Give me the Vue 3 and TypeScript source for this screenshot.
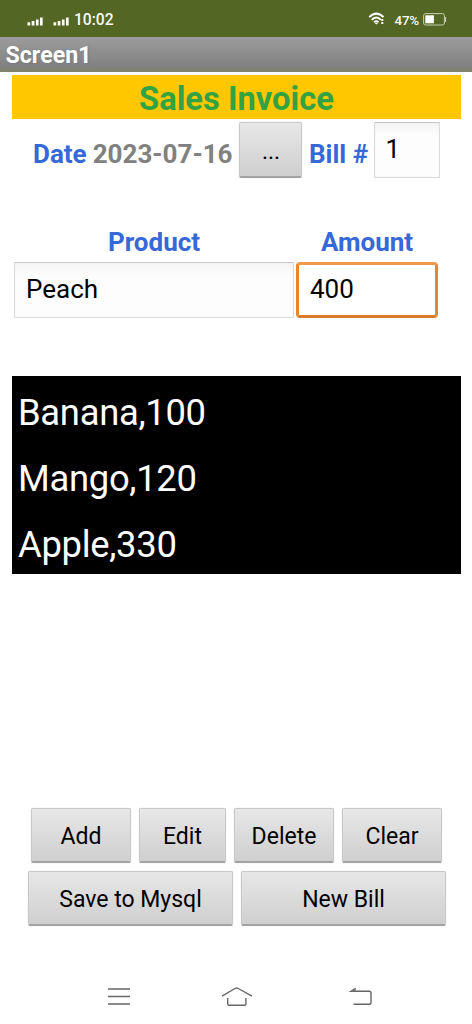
<script setup lang="ts">
import { ref } from 'vue'

const billDate = ref('2023-07-16')
const billNo = ref('1')
const product = ref('Peach')
const amount = ref('400')
const items = ref<string[]>(['Banana,100', 'Mango,120', 'Apple,330'])
const signals = [1, 2]
</script>

<template>
  <div class="phone">
    <header class="status">
      <svg v-for="s in signals" :key="s" class="signal" width="16" height="9" viewBox="0 0 16 9">
        <path d="M.5 5.3h2.7v3.2H.5zM4.7 4.1h2.7v4.4H4.7zM8.9 2.5h2.7v6H8.9zM13 .6h2.7v7.9H13z" fill="#fafbf5" />
      </svg>
      <span class="clock">10:02</span>
      <svg class="wifi" width="18" height="14" viewBox="0 0 18 14" fill="none" stroke="#fff" stroke-width="2">
        <path d="M1.2 5.1Q8.2-1.9 15.6 5.1M3.7 7.9Q8.2 3.2 13 7.9M6.1 10.2q2.2-2 4.4 0" />
        <path d="M6.7 11h3.4l-1.7 1.6z" fill="#fff" stroke="none" />
        <path d="M14.3 7v2M14.3 10v2" />
      </svg>
      <span class="percent">47%</span>
      <svg class="battery" width="24" height="13" viewBox="0 0 24 13">
        <rect x=".6" y=".6" width="20.8" height="11.4" rx="2" fill="none" stroke="#c4cfb1" />
        <rect x="2.3" y="2.3" width="8.6" height="8" fill="#fff" />
        <path d="M22.5 4v5" stroke="#c4cfb1" stroke-width="1.2" />
      </svg>
    </header>
    <div class="appbar">Screen1</div>

    <main>
      <h1>Sales Invoice</h1>
      <div class="bill">
        <span class="label">Date</span>
        <span class="label date">{{ billDate }}</span>
        <button class="pick">...</button>
        <span class="label number">Bill #</span>
        <div class="field bill-field"><span>{{ billNo }}</span></div>
      </div>

      <div class="headings">
        <span class="label">Product</span>
        <span class="label">Amount</span>
      </div>
      <div class="entry">
        <div class="field"><span>{{ product }}</span></div>
        <div class="field focused"><span>{{ amount }}</span></div>
      </div>

      <ul class="list">
        <li v-for="item in items" :key="item">{{ item }}</li>
      </ul>
    </main>

    <div class="actions">
      <div class="row primary">
        <button>Add</button>
        <button>Edit</button>
        <button>Delete</button>
        <button>Clear</button>
      </div>
      <div class="row secondary">
        <button>Save to Mysql</button>
        <button>New Bill</button>
      </div>
    </div>

    <nav>
      <svg width="24" height="20" viewBox="0 0 24 20" fill="none" stroke="#666" stroke-width="1.4">
        <path d="M1 2h22M1 9.5h22M1 17h22" />
      </svg>
      <svg class="home" width="32" height="20" viewBox="0 0 32 20" fill="none" stroke="#666" stroke-width="1.4">
        <path d="M1 9.2 14 1.5q1.6-.9 3.2 0L31 9.2M6.7 11v6q0 1.3 1.3 1.3h15.6q1.3 0 1.3-1.3v-6" />
      </svg>
      <svg width="24" height="20" viewBox="0 0 24 20" fill="none" stroke="#666" stroke-width="1.4">
        <path d="M6.7 1.4 2 4.3h18.2q1.8 0 1.8 1.8v9.4q0 1.8-1.8 1.8H4.5" />
        <path d="M2 4.3 6.7 1.4v2.9z" fill="#777" stroke="none" />
      </svg>
    </nav>
  </div>
</template>

<style>
body {
  margin: 0;
  background: #fff;
}
</style>

<style scoped>
.phone {
  width: 472px;
  height: 1024px;
  display: flex;
  flex-direction: column;
  box-sizing: border-box;
  overflow: hidden;
  background: #fff;
  color: #000;
  font-family: Roboto, "Liberation Sans", sans-serif;
  white-space: nowrap;
}
svg {
  flex: none;
  display: block;
}
.status {
  flex: none;
  height: 37px;
  display: flex;
  align-items: center;
  padding: 1px 25px 0 27px;
  box-sizing: border-box;
  background: #536623;
  color: #fafbf5;
  font-weight: 500;
}
.signal {
  margin: 4px 10px 0 0;
}
.signal + .signal {
  margin-right: 5px;
}
.clock {
  margin-top: 1px;
  font-size: 15.6px;
}
.wifi {
  margin-left: auto;
}
.percent {
  margin: 2px 4px 0 9px;
  font-size: 13.4px;
  letter-spacing: -0.2px;
}
.appbar {
  flex: none;
  height: 35px;
  box-sizing: border-box;
  padding-left: 5.5px;
  background: linear-gradient(#9c9c9c, #808080 88%, #7f846f 91%, #7f846f);
  color: #fff;
  font-size: 23.2px;
  font-weight: 700;
  line-height: 36px;
  text-shadow: 1px 1px 2px #777;
}
main {
  flex: none;
  padding: 3px 11px 0 12px;
}
h1 {
  margin: 0;
  height: 43.5px;
  background: #ffc700;
  color: #31a343;
  font-size: 32.7px;
  font-weight: 700;
  line-height: 48px;
  text-align: center;
}
.label {
  color: #3668d8;
  font-size: 26px;
  font-weight: 700;
}
.bill {
  display: flex;
  height: 56px;
  margin-top: 3.5px;
  padding-left: 21px;
}
.bill .label {
  line-height: 64px;
}
.bill .date {
  margin-left: 6px;
  color: #808080;
}
button {
  box-sizing: border-box;
  padding: 0;
  border: 1px solid #c9c9c9;
  border-bottom: 2px solid #a2a2a2;
  border-radius: 2px;
  background: linear-gradient(#e7e7e7, #cfcfcf);
  box-shadow: 0 0 1px #bbb;
  color: #000;
  font: 400 23px/54px Roboto, "Liberation Sans", sans-serif;
}
.pick {
  width: 63px;
  height: 56px;
  margin: 0 6.5px 0 7px;
  line-height: 58px;
}
.field {
  flex: none;
  width: 280px;
  height: 56px;
  box-sizing: border-box;
  border: 1px solid #dcdcdc;
  border-top-color: #cbcbcb;
  box-shadow: inset 0 0 1px #d8d8d8;
  background: linear-gradient(#f4f4f4, #fdfdfd 12px);
  padding-left: 11px;
  font-size: 26px;
  line-height: 53px;
}
.bill-field {
  width: 66px;
  margin-left: 5.5px;
}
.headings {
  display: grid;
  grid-template-columns: 284px 142px;
  height: 40px;
  margin-top: 44px;
  line-height: 41px;
  text-align: center;
}
.entry {
  display: flex;
  gap: 2px;
  padding-left: 2px;
}
.field.focused {
  width: 142px;
  border: 3px solid #e9862b;
  border-top-color: #ef9a4b;
  border-bottom-color: #dc7c28;
  border-radius: 4px;
  box-shadow: none;
  background: #fff;
  padding-left: 11px;
  line-height: 49px;
}
.list {
  margin: 58px 0 0;
  padding: 4px 6px 0;
  height: 198px;
  box-sizing: border-box;
  background: #000;
  color: #fff;
  list-style: none;
  font-size: 36.4px;
  letter-spacing: -0.3px;
  line-height: 66px;
}
.actions {
  display: flex;
  flex-direction: column;
  gap: 8px;
  margin-top: 234px;
}
.row {
  display: grid;
  gap: 8px;
}
.row button {
  height: 55px;
  padding-top: 1px;
}
.primary {
  grid-template-columns: 100px 87px 100px 100px;
  padding-left: 31px;
}
.secondary {
  grid-template-columns: 205px 205px;
  padding-left: 28px;
}
nav {
  display: flex;
  align-items: center;
  justify-content: space-between;
  margin: 61px 99px 0 107px;
}
.home {
  margin-right: 6px;
}
</style>
